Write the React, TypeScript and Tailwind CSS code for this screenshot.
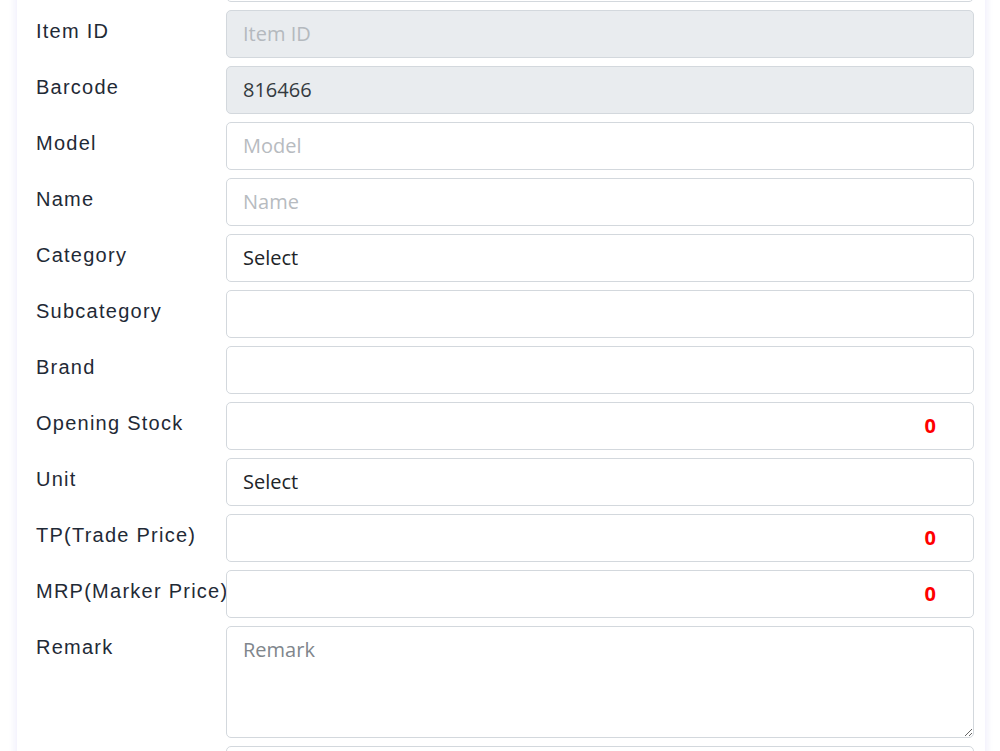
import React from "react";

type Field =
  | { id: string; label: string; kind: "disabled"; value?: string; placeholder?: string }
  | { id: string; label: string; kind: "text"; value?: string; placeholder?: string }
  | { id: string; label: string; kind: "number" }
  | { id: string; label: string; kind: "textarea"; placeholder: string };

const fields: Field[] = [
  { id: "top", label: "", kind: "text" },
  { id: "itemid", label: "Item ID", kind: "disabled", placeholder: "Item ID" },
  { id: "barcode", label: "Barcode", kind: "disabled", value: "816466" },
  { id: "model", label: "Model", kind: "text", placeholder: "Model" },
  { id: "name", label: "Name", kind: "text", placeholder: "Name" },
  { id: "category", label: "Category", kind: "text", value: "Select" },
  { id: "subcategory", label: "Subcategory", kind: "text" },
  { id: "brand", label: "Brand", kind: "text" },
  { id: "opening", label: "Opening Stock", kind: "number" },
  { id: "unit", label: "Unit", kind: "text", value: "Select" },
  { id: "tp", label: "TP(Trade Price)", kind: "number" },
  { id: "mrp", label: "MRP(Marker Price)", kind: "number" },
  { id: "remark", label: "Remark", kind: "textarea", placeholder: "Remark" },
  { id: "bottom", label: "", kind: "text" },
];

const inputBase =
  "flex-1 min-w-0 h-[48px] rounded-[5px] border border-[#d3d8dd] flex items-center pl-4 text-[20px]";
const openSans = "font-['Open_Sans',sans-serif]";

function Control({ f }: { f: Field }) {
  if (f.kind === "disabled") {
    return (
      <div className={`${inputBase} ${openSans} bg-[#e9ecef]`}>
        {f.value ? (
          <span className="text-[#343a40]">{f.value}</span>
        ) : (
          <span className="text-[#b4b9be]">{f.placeholder}</span>
        )}
      </div>
    );
  }
  if (f.kind === "number") {
    return (
      <div className={`${inputBase} ${openSans} bg-white justify-end pr-[37px]`}>
        <span className="font-bold text-[#ff0000]">0</span>
      </div>
    );
  }
  if (f.kind === "textarea") {
    return (
      <textarea
        placeholder={f.placeholder}
        className={`flex-1 min-w-0 h-[112px] rounded-[5px] border border-[#d3d8dd] bg-white pl-4 pt-[8px] text-[20px] leading-[30px] ${openSans} placeholder:text-[#80868c] outline-none resize-y`}
      />
    );
  }
  return (
    <div className={`${inputBase} ${openSans} bg-white`}>
      {f.value ? (
        <span className="text-[#212529]">{f.value}</span>
      ) : f.placeholder ? (
        <span className="text-[#b7bbc0]">{f.placeholder}</span>
      ) : null}
    </div>
  );
}

export default function App() {
  return (
    <div className="min-h-screen bg-white pl-[17px] pr-[15px] overflow-hidden">
      <div className="bg-white shadow-[0_0_7px_2px_rgba(110,100,230,0.10)] pl-[19px] pr-[11px] pb-4">
        <div className="flex flex-col gap-[8px] -mt-[46px]">
          {fields.map((f) => (
            <div key={f.id} className="flex items-start">
              <div className="w-[190px] shrink-0 whitespace-nowrap pt-[6px] text-[20px] leading-[30px] tracking-[1.25px] text-[#1f2a36] font-['Liberation_Sans',Arial,sans-serif]">
                {f.label}
              </div>
              <Control f={f} />
            </div>
          ))}
        </div>
      </div>
    </div>
  );
}
